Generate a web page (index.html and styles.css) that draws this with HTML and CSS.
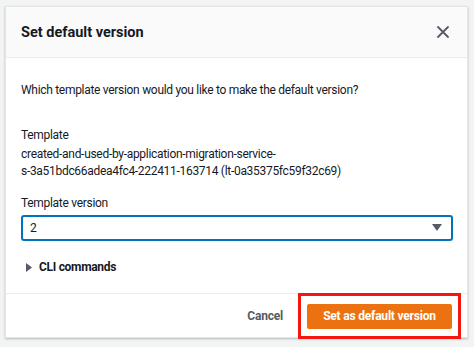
FILE: index.html
```html
<!DOCTYPE html>
<html>
<head>
<meta charset="utf-8">
<link rel="stylesheet" href="styles.css">
</head>
<body>
<div class="modal">
  <div class="header">
    <h2 class="title">Set default version</h2>
    <svg class="close" width="14" height="14" viewBox="0 0 14 14"><path d="M2 2 L12 12 M12 2 L2 12" stroke="#545b64" stroke-width="1.8" fill="none" stroke-linecap="round"/></svg>
  </div>
  <div class="body">
    <p class="question">Which template version would you like to make the default version?</p>
    <div class="field">
      <div class="label">Template</div>
      <div class="value">created-and-used-by-application-migration-service-<br>s-3a51bdc66adea4fc4-222411-163714 (lt-0a35375fc59f32c69)</div>
    </div>
    <div class="field">
      <div class="label">Template version</div>
      <div class="select">
        <span>2</span>
        <svg class="caret" width="10" height="8" viewBox="0 0 10 8"><path d="M0 0 L10 0 L5 7 Z" fill="#545b64"/></svg>
      </div>
    </div>
    <div class="expander">
      <svg class="tri" width="6" height="9" viewBox="0 0 6 9"><path d="M0 0 L6 4.5 L0 9 Z" fill="#545b64"/></svg>
      <span>CLI commands</span>
    </div>
  </div>
  <div class="footer">
    <button class="link-btn">Cancel</button>
    <div class="highlight">
      <button class="primary">Set as default version</button>
    </div>
  </div>
</div>
</body>
</html>
```
FILE: styles.css
```css
html, body {
  margin: 0;
  padding: 0;
}
body {
  background: #f2f3f3;
  width: 474px;
  height: 347px;
  box-sizing: border-box;
  padding: 6px 6px 9px 5px;
  font-family: Roboto, "Liberation Sans", Arial, sans-serif;
  color: #16191f;
  overflow: hidden;
}
.modal {
  background: #fff;
  border: 1px solid #e4e6e6;
  box-shadow: 0 1px 2px rgba(0,0,0,0.25);
  height: 332px;
  box-sizing: border-box;
  display: flex;
  flex-direction: column;
}
.header {
  height: 51px;
  box-sizing: border-box;
  background: #fafafa;
  border-bottom: 1px solid #eaeded;
  display: flex;
  align-items: center;
  justify-content: space-between;
  padding: 0 17px 0 15px;
}
.title {
  margin: 0;
  font-size: 14.5px;
  font-weight: 700;
}
.close { display: block; }
.body {
  flex: 1;
  padding: 22px 14px 0 15px;
  font-size: 12px;
  letter-spacing: -0.3px;
}
.question {
  margin: 0;
  line-height: 20px;
}
.field { margin-top: 25px; }
.field + .field { margin-top: 13px; }
.label {
  line-height: 20px;
}
.value {
  margin-top: 1px;
  line-height: 17px;
}
.select {
  margin-top: 2px;
  height: 26px;
  box-sizing: border-box;
  border: 2px solid #0073bb;
  border-radius: 3px;
  display: flex;
  align-items: center;
  justify-content: space-between;
  padding: 0 9px 0 7px;
}
.expander {
  margin-top: 16px;
  display: flex;
  align-items: center;
  line-height: 20px;
  padding-left: 5px;
  font-weight: 700;
  color: #16191f;
}
.tri { margin-right: 7px; }
.footer {
  height: 44px;
  box-sizing: border-box;
  border-top: 1px solid #eaeded;
  display: flex;
  align-items: center;
  justify-content: flex-end;
  padding-right: 6px;
}
.link-btn {
  background: none;
  border: none;
  font-family: inherit;
  font-size: 12px;
  font-weight: 700;
  letter-spacing: -0.2px;
  color: #545b64;
  padding: 0;
  margin-right: 15px;
}
.highlight {
  border: 3px solid #f4160f;
  padding: 8px 6px 7px 6px;
}
.primary {
  display: block;
  background: #ec7211;
  border: none;
  border-radius: 2px;
  color: #fff;
  font-family: inherit;
  font-size: 12px;
  font-weight: 700;
  letter-spacing: -0.2px;
  width: 145px;
  height: 25px;
  padding: 0;
}
```
